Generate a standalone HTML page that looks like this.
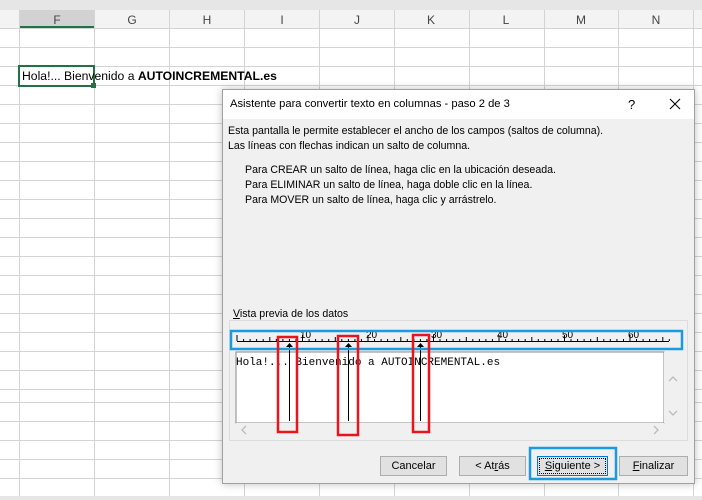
<!DOCTYPE html>
<html><head><meta charset="utf-8"><style>
*{margin:0;padding:0;box-sizing:border-box}
body{width:702px;height:500px;overflow:hidden;background:#fff;font-family:"Liberation Sans",sans-serif;position:relative}
.a{position:absolute}
.t{font-size:10.6px;color:#000;white-space:nowrap}
.btn{position:absolute;top:456px;height:20px;background:#e1e1e1;border:1px solid #adadad;font-size:11px;text-align:center;line-height:18px}
</style></head><body>
<div class="a" style="left:0;top:0;width:702px;height:10px;background:#e6e6e6"></div>
<svg class="a" style="left:0;top:0" width="702" height="500">
<rect x="0" y="10" width="702" height="18" fill="#f3f3f3"/>
<rect x="19" y="10" width="75" height="18" fill="#d2d2d2"/>
<line x1="19" y1="27" x2="94" y2="27" stroke="#217346" stroke-width="2"/>
<g stroke="#d4d4d4" stroke-width="1">
<line x1="0" y1="28.5" x2="702" y2="28.5"/>
<line x1="0" y1="47.5" x2="702" y2="47.5"/><line x1="0" y1="66.5" x2="702" y2="66.5"/><line x1="0" y1="85.5" x2="702" y2="85.5"/>
<line x1="0" y1="104.5" x2="702" y2="104.5"/><line x1="0" y1="123.5" x2="702" y2="123.5"/><line x1="0" y1="142.5" x2="702" y2="142.5"/>
<line x1="0" y1="161.5" x2="702" y2="161.5"/><line x1="0" y1="180.5" x2="702" y2="180.5"/><line x1="0" y1="199.5" x2="702" y2="199.5"/>
<line x1="0" y1="218.5" x2="702" y2="218.5"/><line x1="0" y1="237.5" x2="702" y2="237.5"/><line x1="0" y1="256.5" x2="702" y2="256.5"/>
<line x1="0" y1="275.5" x2="702" y2="275.5"/><line x1="0" y1="294.5" x2="702" y2="294.5"/><line x1="0" y1="313.5" x2="702" y2="313.5"/>
<line x1="0" y1="332.5" x2="702" y2="332.5"/><line x1="0" y1="351.5" x2="702" y2="351.5"/><line x1="0" y1="370.5" x2="702" y2="370.5"/>
<line x1="0" y1="389.5" x2="702" y2="389.5"/><line x1="0" y1="402.5" x2="702" y2="402.5"/><line x1="0" y1="421.5" x2="702" y2="421.5"/>
<line x1="0" y1="440.5" x2="702" y2="440.5"/><line x1="0" y1="459.5" x2="702" y2="459.5"/><line x1="0" y1="478.5" x2="702" y2="478.5"/>
<line x1="19.5" y1="10" x2="19.5" y2="496"/><line x1="94.5" y1="10" x2="94.5" y2="496"/><line x1="169.5" y1="10" x2="169.5" y2="496"/>
<line x1="244.5" y1="10" x2="244.5" y2="496"/><line x1="319.5" y1="10" x2="319.5" y2="496"/><line x1="394.5" y1="10" x2="394.5" y2="496"/>
<line x1="469.5" y1="10" x2="469.5" y2="496"/><line x1="544.5" y1="10" x2="544.5" y2="496"/><line x1="618.5" y1="10" x2="618.5" y2="496"/><line x1="693.5" y1="10" x2="693.5" y2="496"/>
</g>
<g font-size="12" fill="#444" text-anchor="middle" font-family="Liberation Sans">
<text x="57" y="24">F</text><text x="132" y="24">G</text><text x="207" y="24">H</text><text x="282" y="24">I</text><text x="357" y="24">J</text><text x="431" y="24">K</text><text x="506" y="24">L</text><text x="581" y="24">M</text><text x="656" y="24">N</text>
</g>
<rect x="19" y="66" width="75" height="20" fill="none" stroke="#217346" stroke-width="2"/>
<rect x="91" y="83" width="5" height="5" fill="#217346"/>
<text x="22" y="80" font-size="12.2" font-family="Liberation Sans">Hola!... Bienvenido a <tspan font-weight="bold">AUTOINCREMENTAL.es</tspan></text>
<rect x="0" y="496" width="702" height="4" fill="#e6e6e6"/>
</svg>

<div class="a" style="left:222px;top:89px;width:473px;height:395px;background:#f0f0f0;border:1px solid #a0a0a0;box-shadow:0 0 8px rgba(0,0,0,.25)">
<div class="a" style="left:0;top:0;width:471px;height:29px;background:#fff"></div>
<div class="a t" style="left:7px;top:8px;font-size:11.2px">Asistente para convertir texto en columnas - paso 2 de 3</div>
<div class="a t" style="left:405px;top:7px;font-size:13px">?</div>
<svg class="a" style="left:446px;top:8px" width="12" height="12"><path d="M1 1L11 11M11 1L1 11" stroke="#000" stroke-width="1.1"/></svg>
<div class="a t" style="left:5px;top:35px">Esta pantalla le permite establecer el ancho de los campos (saltos de columna).</div>
<div class="a t" style="left:5px;top:50px">Las líneas con flechas indican un salto de columna.</div>
<div class="a t" style="left:22px;top:74px">Para CREAR un salto de línea, haga clic en la ubicación deseada.</div>
<div class="a t" style="left:22px;top:89px">Para ELIMINAR un salto de línea, haga doble clic en la línea.</div>
<div class="a t" style="left:22px;top:104px">Para MOVER un salto de línea, haga clic y arrástrelo.</div>
<div class="a" style="left:6px;top:230px;width:459px;height:121px;border:1px solid #dcdcdc"></div>
<div class="a t" style="left:10px;top:218px;background:#f0f0f0;padding-right:2px"><u>V</u>ista previa de los datos</div>
</div>

<svg class="a" style="left:0;top:0" width="702" height="500">
<rect x="236" y="352" width="428" height="71" fill="#fff" stroke="#888"/>
<rect x="664" y="352" width="18" height="71" fill="#f0f0f0"/>
<path d="M669 381l4-4 4 4" fill="none" stroke="#bbb" stroke-width="1.3"/>
<path d="M669 411l4 4 4-4" fill="none" stroke="#bbb" stroke-width="1.3"/>
<rect x="236" y="423" width="428" height="15" fill="#f0f0f0"/>
<path d="M246 426l-4 4 4 4" fill="none" stroke="#bbb" stroke-width="1.3"/>
<path d="M654 426l4 4-4 4" fill="none" stroke="#bbb" stroke-width="1.3"/>
<text x="236" y="365" font-size="11" font-family="Liberation Mono">Hola!... Bienvenido a AUTOINCREMENTAL.es</text>
<line x1="237" y1="341.5" x2="669" y2="341.5" stroke="#000"/>
<g stroke="#000" id="ticks"></g>
<g font-size="10" fill="#000" font-family="Liberation Sans">
<text x="300" y="338">10</text><text x="366" y="338">20</text><text x="431" y="338">30</text><text x="497" y="338">40</text><text x="562" y="338">50</text><text x="628" y="338">60</text>
</g>
<g stroke="#000">
<line x1="289.5" y1="346" x2="289.5" y2="421"/><line x1="348.5" y1="346" x2="348.5" y2="421"/><line x1="420.5" y1="346" x2="420.5" y2="421"/>
</g>
<g fill="#000"><path d="M286 347h7l-3.5-4z"/><path d="M345 347h7l-3.5-4z"/><path d="M417 347h7l-3.5-4z"/></g>
<rect x="231" y="331" width="451" height="18" fill="none" stroke="#1a9be0" stroke-width="2.5"/>
<g fill="none" stroke="#e8141e" stroke-width="2.5">
<rect x="278" y="337" width="19" height="95"/><rect x="338" y="336" width="20" height="99"/><rect x="413" y="335" width="16" height="97"/>
</g>
<rect x="530" y="448" width="86" height="31" fill="none" stroke="#1a9be0" stroke-width="2.5"/>
</svg>
<div class="btn" style="left:380px;width:67px">Cancelar</div>
<div class="btn" style="left:459px;width:67px">&lt; At<u>r</u>ás</div>
<div class="btn" style="left:537px;width:71px;border:1px solid #0078d7;outline:1px dotted #000;outline-offset:-3px"><u>S</u>iguiente &gt;</div>
<div class="btn" style="left:619px;width:69px"><u>F</u>inalizar</div>
<script>
var g=document.getElementById('ticks'),s='';
for(var i=0;i<=66;i++){var x=(237+i*6.55).toFixed(1);var h=i%10==0?6:(i%5==0?4:2);s+='<line x1="'+x+'" y1="'+(341-h)+'" x2="'+x+'" y2="341"/>';}
g.innerHTML=s;
</script>
</body></html>
